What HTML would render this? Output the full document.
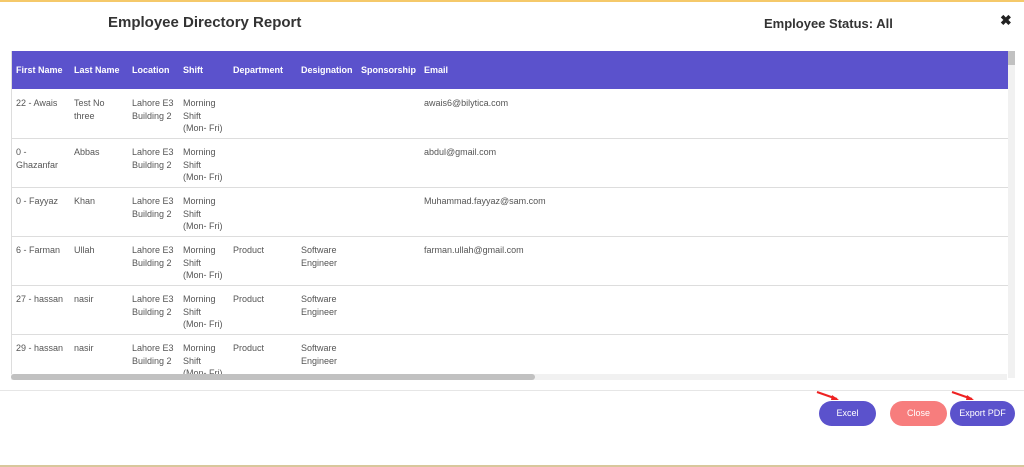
<!DOCTYPE html>
<html><head><style>
body{margin:0;width:1024px;height:467px;background:#fff;font-family:"Liberation Sans",sans-serif;position:relative;overflow:hidden}
.top{position:absolute;left:0;top:0;width:1024px;height:2px;background:#f5c96a}
.bot{position:absolute;left:0;bottom:0;width:1024px;height:2px;background:#d8c79c}
.title{position:absolute;left:108px;top:14px;font-size:15px;font-weight:bold;color:#333}
.status{position:absolute;left:764px;top:16px;font-size:13px;font-weight:bold;color:#333}
.x{position:absolute;left:1000px;top:12px;font-size:14px;font-weight:bold;color:#222}
.tbl{position:absolute;left:11px;top:51px;width:996px;height:324px;overflow:hidden;border-left:1px solid #ddd}
.hd{position:absolute;left:0;top:0;width:996px;height:38px;background:#5b52cc}
.hd span{position:absolute;top:14px;color:#fff;font-size:9px;font-weight:bold}
.row{position:absolute;left:0;width:996px;height:49px;border-bottom:1px solid #ddd}
.row span{position:absolute;top:8px;font-size:9px;color:#555;line-height:12.5px}
.vs{position:absolute;left:1008px;top:51px;width:7px;height:327px;background:#f1f1f1}
.vs div{width:7px;height:14px;background:#c1c1c1}
.hs{position:absolute;left:11px;top:374px;width:996px;height:6px;background:#f1f1f1}
.hs div{width:524px;height:6px;background:#c1c1c1;border-radius:3px}
.line{position:absolute;left:0;top:390px;width:1024px;height:1px;background:#e6e6e6}
.btn{position:absolute;top:401px;height:25px;border-radius:13px;color:#fff;font-size:9px;text-align:center;line-height:25px}
</style></head><body>
<div class="top"></div>
<div class="title">Employee Directory Report</div>
<div class="status">Employee Status: All</div>
<div class="x">✖</div>
<div class="tbl">
<div class="hd"><span style="left:4px">First Name</span><span style="left:62px">Last Name</span><span style="left:120px">Location</span><span style="left:171px">Shift</span><span style="left:221px">Department</span><span style="left:289px">Designation</span><span style="left:349px">Sponsorship</span><span style="left:412px">Email</span></div>
<div class="row" style="top:38px"><span style="left:4px">22 - Awais</span><span style="left:62px">Test No<br>three</span><span style="left:120px">Lahore E3<br>Building 2</span><span style="left:171px">Morning<br>Shift<br>(Mon- Fri)</span><span style="left:412px">awais6@bilytica.com</span></div>
<div class="row" style="top:87px"><span style="left:4px">0 -<br>Ghazanfar</span><span style="left:62px">Abbas</span><span style="left:120px">Lahore E3<br>Building 2</span><span style="left:171px">Morning<br>Shift<br>(Mon- Fri)</span><span style="left:412px">abdul@gmail.com</span></div>
<div class="row" style="top:136px"><span style="left:4px">0 - Fayyaz</span><span style="left:62px">Khan</span><span style="left:120px">Lahore E3<br>Building 2</span><span style="left:171px">Morning<br>Shift<br>(Mon- Fri)</span><span style="left:412px">Muhammad.fayyaz@sam.com</span></div>
<div class="row" style="top:185px"><span style="left:4px">6 - Farman</span><span style="left:62px">Ullah</span><span style="left:120px">Lahore E3<br>Building 2</span><span style="left:171px">Morning<br>Shift<br>(Mon- Fri)</span><span style="left:221px">Product</span><span style="left:289px">Software<br>Engineer</span><span style="left:412px">farman.ullah@gmail.com</span></div>
<div class="row" style="top:234px"><span style="left:4px">27 - hassan</span><span style="left:62px">nasir</span><span style="left:120px">Lahore E3<br>Building 2</span><span style="left:171px">Morning<br>Shift<br>(Mon- Fri)</span><span style="left:221px">Product</span><span style="left:289px">Software<br>Engineer</span></div>
<div class="row" style="top:283px"><span style="left:4px">29 - hassan</span><span style="left:62px">nasir</span><span style="left:120px">Lahore E3<br>Building 2</span><span style="left:171px">Morning<br>Shift<br>(Mon- Fri)</span><span style="left:221px">Product</span><span style="left:289px">Software<br>Engineer</span></div>
</div>
<div class="vs"><div></div></div>
<div class="hs"><div></div></div>
<div class="line"></div>
<svg style="position:absolute;left:815px;top:390px" width="30" height="12"><path d="M2 2 L22 9" stroke="#e22" stroke-width="2"/><path d="M17 5 L24 10 L16 10Z" fill="#e22"/></svg>
<svg style="position:absolute;left:950px;top:390px" width="30" height="12"><path d="M2 2 L22 9" stroke="#e22" stroke-width="2"/><path d="M17 5 L24 10 L16 10Z" fill="#e22"/></svg>
<div class="btn" style="left:819px;width:57px;background:#5b52cc">Excel</div>
<div class="btn" style="left:890px;width:57px;background:#f77d7d">Close</div>
<div class="btn" style="left:950px;width:65px;background:#5b52cc">Export PDF</div>
<div class="bot"></div>
</body></html>
